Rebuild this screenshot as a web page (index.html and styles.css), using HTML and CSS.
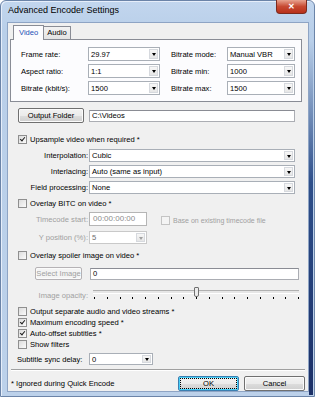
FILE: index.html
```html
<!DOCTYPE html>
<html lang="en">
<head>
  <meta charset="UTF-8">
  <title>Advanced Encoder Settings</title>
  <link rel="stylesheet" href="styles.css">
</head>
<body>
  <div class="window">
    <div class="titlebar">
      <span class="title">Advanced Encoder Settings</span>
      <span class="close">&#x2715;</span>
    </div>
    <div class="client">
      <div class="tabs">
        <span class="tab active">Video</span>
        <span class="tab">Audio</span>
      </div>
      <div class="panel">
        <div class="prow">
          <span class="plabel">Frame rate:</span>
          <div class="combo w72"><span>29.97</span><i></i></div>
          <span class="plabel2">Bitrate mode:</span>
          <div class="combo w68"><span>Manual VBR</span><i></i></div>
        </div>
        <div class="prow">
          <span class="plabel">Aspect ratio:</span>
          <div class="combo w72"><span>1:1</span><i></i></div>
          <span class="plabel2">Bitrate min:</span>
          <div class="combo w68"><span>1000</span><i></i></div>
        </div>
        <div class="prow">
          <span class="plabel">Bitrate (kbit/s):</span>
          <div class="combo w72"><span>1500</span><i></i></div>
          <span class="plabel2">Bitrate max:</span>
          <div class="combo w68"><span>1500</span><i></i></div>
        </div>
      </div>

      <div class="row folder">
        <button class="btn wide">Output Folder</button>
        <div class="textbox fill">C:\Videos</div>
      </div>

      <label class="check upsample"><span class="box checked"></span>Upsample video when required *</label>

      <div class="row field first">
        <span class="rlabel">Interpolation:</span>
        <div class="combo fill"><span>Cubic</span><i></i></div>
      </div>
      <div class="row field">
        <span class="rlabel">Interlacing:</span>
        <div class="combo fill"><span>Auto (same as input)</span><i></i></div>
      </div>
      <div class="row field">
        <span class="rlabel">Field processing:</span>
        <div class="combo fill"><span>None</span><i></i></div>
      </div>

      <label class="check bitc"><span class="box"></span>Overlay BITC on video *</label>

      <div class="row field timecode">
        <span class="rlabel off">Timecode start:</span>
        <div class="textbox off w58">00:00:00:00</div>
        <label class="check small off"><span class="box off"></span>Base on existing timecode file</label>
      </div>
      <div class="row field ypos">
        <span class="rlabel off">Y position (%):</span>
        <div class="combo w58 off"><span>5</span><i></i></div>
      </div>

      <label class="check spoiler"><span class="box"></span>Overlay spoiler image on video *</label>

      <div class="row select">
        <button class="btn off">Select Image</button>
        <div class="textbox fill tall">0</div>
      </div>

      <div class="row opacity">
        <span class="rlabel off">Image opacity:</span>
        <div class="slider">
          <div class="track"></div>
          <div class="thumb"></div>
          <div class="ticks">
            <b></b><b></b><b></b><b></b><b></b><b></b><b></b><b></b><b></b>
            <b></b><b></b><b></b><b></b><b></b><b></b><b></b><b></b>
          </div>
        </div>
      </div>

      <label class="check tight first-tight"><span class="box"></span>Output separate audio and video streams *</label>
      <label class="check tight"><span class="box checked"></span>Maximum encoding speed *</label>
      <label class="check tight"><span class="box checked"></span>Auto-offset subtitles *</label>
      <label class="check tight"><span class="box"></span>Show filters</label>

      <div class="row sync">
        <span class="synclabel">Subtitle sync delay:</span>
        <div class="combo w64"><span>0</span><i></i></div>
      </div>

      <div class="separator"></div>

      <div class="footer">
        <span class="note">* Ignored during Quick Encode</span>
        <button class="btn ok">OK</button>
        <button class="btn cancel">Cancel</button>
      </div>
    </div>
  </div>
</body>
</html>
```

FILE: styles.css
```css
body {
  margin: 0;
  background: #ffffff;
  font-family: "Liberation Sans", Arial, sans-serif;
  font-size: 7.6px;
  color: #000000;
}

.window {
  width: 315px;
  height: 397px;
  box-sizing: border-box;
  background: linear-gradient(to bottom, #c2d6ee 0px, #b9cfe9 30px, #bcd1ea 100%);
  border: 1px solid #6b84a8;
  border-radius: 6px 6px 0 0;
  padding: 0 5px 5px 6px;
  position: relative;
  box-shadow: inset 1px 1px 0 #e6eefa;
}

.window::after {
  content: "";
  position: absolute;
  right: 1px;
  top: 40px;
  bottom: 1px;
  width: 4px;
  background: linear-gradient(to bottom, #b9cfe9, #2e4f8a 40%, #1b2f66);
}

.titlebar {
  height: 21px;
  display: flex;
  align-items: center;
  position: relative;
}

.title {
  font-size: 9px;
  padding-left: 1px;
  padding-bottom: 3px;
  color: #000;
}

.close {
  position: absolute;
  right: 2px;
  top: -1px;
  width: 29px;
  height: 13px;
  background: linear-gradient(to bottom, #e8a38f, #c74a32 50%, #b8301a);
  border: 1px solid #7c2b1e;
  border-top: none;
  border-radius: 0 0 4px 4px;
  color: #ffffff;
  font-size: 8px;
  font-weight: bold;
  text-align: center;
  line-height: 13px;
}

.client {
  height: 370px;
  background: #f0f0f0;
  border: 1px solid #8ea4c4;
  box-sizing: border-box;
  padding: 2px 0 0 2px;
}

.tabs {
  display: flex;
  height: 14px;
  align-items: flex-end;
  padding-left: 4px;
}

.tab {
  height: 12px;
  line-height: 12px;
  padding: 0 3px;
  border: 1px solid #898c95;
  border-bottom: none;
  background: linear-gradient(to bottom, #f2f2f2, #e3e3e3);
  margin-left: -1px;
}

.tab.active {
  height: 14px;
  line-height: 14px;
  background: #fcfcfe;
  color: #1c50b6;
  position: relative;
  z-index: 1;
  margin-bottom: -1px;
  padding: 0 5px;
}

.panel {
  width: 292px;
  height: 63px;
  box-sizing: border-box;
  border: 1px solid #898c95;
  background: #fcfcfe;
  padding: 7px 0 0 10px;
}

.prow {
  display: flex;
  align-items: center;
  height: 14px;
  margin-bottom: 3px;
}

.plabel {
  width: 67px;
}

.plabel2 {
  width: 56px;
  margin-left: 11px;
}

.combo {
  height: 14px;
  box-sizing: border-box;
  border: 1px solid #a9afb7;
  background: #ffffff;
  display: flex;
  align-items: center;
  position: relative;
}

.combo span {
  flex: 1;
  padding-left: 2px;
  white-space: nowrap;
  overflow: hidden;
}

.combo i {
  width: 9px;
  height: calc(100% - 2px);
  margin-right: 1px;
  border: 1px solid #d6d9de;
  box-sizing: border-box;
  background: linear-gradient(to bottom, #f7f7f7, #e6e6e6);
  position: relative;
}

.combo i::after {
  content: "";
  position: absolute;
  left: 2px;
  top: 50%;
  margin-top: -1px;
  border-left: 2px solid transparent;
  border-right: 2px solid transparent;
  border-top: 3px solid #000000;
}

.combo.off span {
  color: #6d6d6d;
}

.combo.off i::after {
  border-top-color: #a0a0a0;
}

.w72 { width: 72px; }
.w68 { width: 68px; }
.w64 { width: 64px; }
.w58 { width: 58px; }

.row {
  display: flex;
  align-items: center;
  padding-left: 8px;
}

.folder {
  margin-top: 6px;
  height: 15px;
}

.fill {
  width: 206px;
}

.btn {
  font-family: inherit;
  font-size: inherit;
  height: 15px;
  padding: 0;
  border: 1px solid #707070;
  border-radius: 2px;
  background: linear-gradient(to bottom, #f2f2f2 0%, #ebebeb 50%, #dddddd 51%, #cfcfcf 100%);
  color: #000000;
  box-shadow: inset 0 0 0 1px #fbfbfb;
}

.btn.wide {
  width: 66px;
  margin-right: 5px;
}

.textbox {
  height: 12px;
  box-sizing: border-box;
  border: 1px solid #abadb3;
  border-top-color: #8a8c94;
  background: #ffffff;
  padding-left: 2px;
  line-height: 10px;
  white-space: nowrap;
}

.textbox.tall {
  height: 12px;
  width: 209px;
}

.check {
  display: flex;
  align-items: center;
  height: 10px;
  padding-left: 8px;
}

.box {
  width: 9px;
  height: 9px;
  box-sizing: border-box;
  border: 1px solid #8f8f8f;
  background: linear-gradient(135deg, #dcdcdc, #fbfbfb);
  margin-right: 3px;
  position: relative;
  flex: none;
}

.box.checked::after {
  content: "";
  position: absolute;
  left: 2px;
  top: 0px;
  width: 2px;
  height: 4px;
  border-right: 1.5px solid #1e1e1e;
  border-bottom: 1.5px solid #1e1e1e;
  transform: rotate(40deg);
}

.box.off {
  border-color: #c4c4c4;
  background: #f4f4f4;
}

.upsample {
  margin-top: 11px;
}

.field {
  height: 13px;
  margin-top: 3px;
}

.field.first {
  margin-top: 5px;
}

.field .combo {
  height: 13px;
}

.rlabel {
  width: 70px;
  text-align: right;
  padding-right: 1px;
  white-space: nowrap;
}

.off {
  color: #a0a0a0;
}

.textbox.off {
  color: #8c8c8c;
  height: 14px;
  line-height: 12px;
  font-size: 8px;
  border-color: #b5b5b5;
  padding-left: 3px;
}

.bitc {
  margin-top: 4px;
}

.timecode {
  height: 14px;
  margin-top: 4px;
}

.check.small {
  padding-left: 0;
  margin-left: 14px;
  margin-top: 3px;
  font-size: 7px;
}

.ypos {
  margin-top: 5px;
}

.ypos .combo {
  border-color: #c9c9c9;
}

.spoiler {
  margin-top: 6px;
}

.select {
  margin-top: 7px;
  height: 13px;
  padding-left: 25px;
}

.btn.off {
  width: 47px;
  height: 13px;
  margin-right: 8px;
  color: #a0a0a0;
  border-color: #b5b2b5;
  background: #f4f4f4;
}

.opacity {
  height: 14px;
  margin-top: 8px;
}

.slider {
  width: 206px;
  height: 14px;
  margin-left: 4px;
  position: relative;
}

.track {
  position: absolute;
  left: 0;
  right: 0;
  top: 2px;
  height: 2px;
  border-top: 1px solid #b0b0b0;
  border-bottom: 1px solid #ffffff;
  background: #e6e6e6;
}

.thumb {
  position: absolute;
  left: 101px;
  top: -1px;
  width: 3px;
  height: 8px;
  border: 1px solid #707070;
  border-radius: 1px 1px 2px 2px;
  background: #ececec;
}

.ticks {
  position: absolute;
  left: 1px;
  right: 0;
  top: 9px;
  display: flex;
  justify-content: space-between;
}

.ticks b {
  width: 1px;
  height: 2px;
  background: #000000;
}

.tight {
  height: 10px;
  margin-top: 1px;
}

.first-tight {
  margin-top: 4px;
}

.sync {
  margin-top: 4px;
  height: 12px;
  padding-left: 7px;
}

.synclabel {
  width: 72px;
}

.sync .combo {
  height: 12px;
}

.separator {
  margin: 4px 3px 0 1px;
  height: 0;
  border-top: 1px solid #a0a0a0;
  border-bottom: 1px solid #ffffff;
}

.footer {
  display: flex;
  align-items: center;
  height: 14px;
  margin-top: 5px;
  padding-left: 1px;
}

.note {
  width: 167px;
}

.btn.ok {
  width: 61px;
  height: 15px;
  border-color: #3c7fb1;
  box-shadow: inset 0 0 0 1px #48d0f8;
  outline: 1px dotted #000000;
  outline-offset: -3px;
}

.btn.cancel {
  width: 61px;
  height: 15px;
  margin-left: 5px;
}
```
